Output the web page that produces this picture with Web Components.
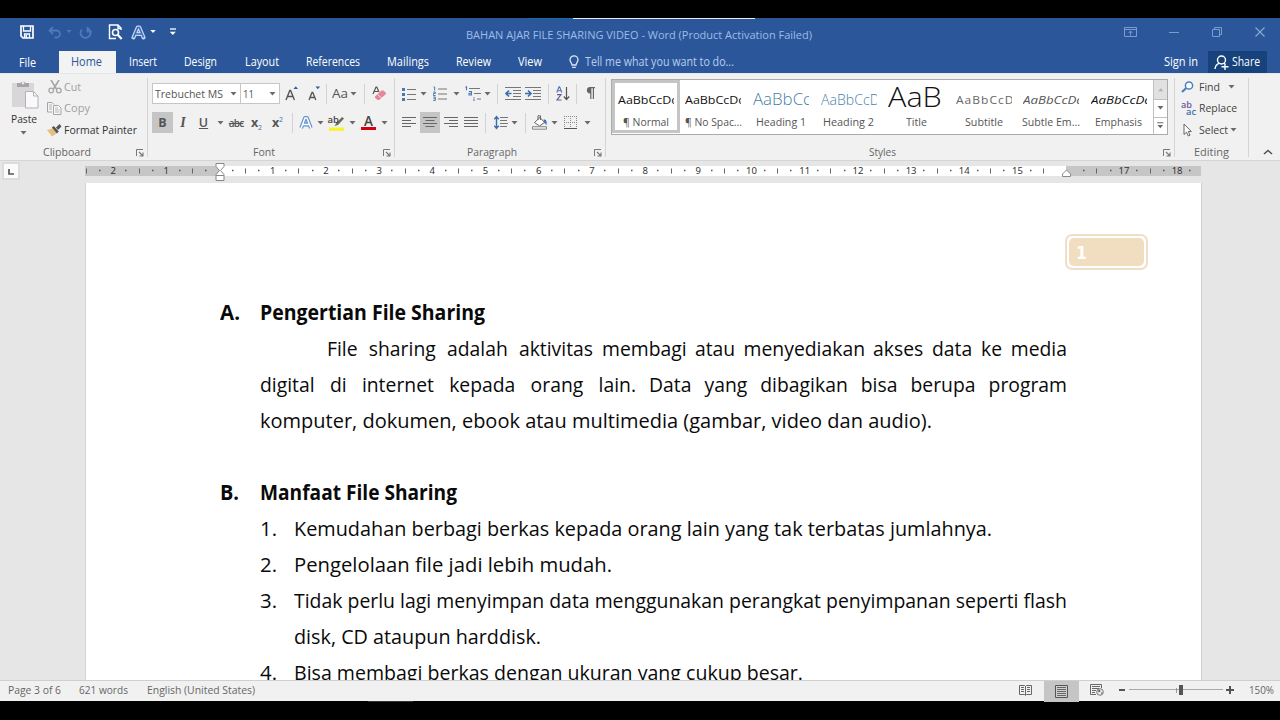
<!DOCTYPE html>
<html lang="id">
<head>
<meta charset="utf-8">
<title>BAHAN AJAR FILE SHARING VIDEO - Word</title>
<style>
html,body{margin:0;background:#000}
body{width:1280px;height:720px;overflow:hidden}
</style>
</head>
<body>
<word-app></word-app>
<script>
const ICONS = {
  down: [7,4,'<path d="M.5 0h6l-3 3.4z" fill="#6a6a6a"/>'],
  downw: [6,4,'<path d="M.3 0h5.4L3 3z" fill="#fff"/>'],
  save: [14,14,'<path d="M1 1h12v12H3L1 11z" fill="none" stroke="#fff" stroke-width="1.7"/><path d="M3.5 1v5h7V1M4.5 13V9h5v4" fill="none" stroke="#fff" stroke-width="1.3"/><path d="M5.500 10h1.600v3H5.500z" fill="#fff"/>'],
  undo: [14,13,'<path d="M5 1L1.500 4.500 5 8M2 4.500h6.500a3.500 3.500 0 010 7H6.500" fill="none" stroke="#4f79b8" stroke-width="1.800"/>'],
  redo: [14,13,'<path d="M9.500 2.200A5 5 0 113.300 3.300M9 .8v4.500h4.500" transform="translate(-.5 .3)" fill="none" stroke="#4f79b8" stroke-width="1.800"/>'],
  preview: [15,16,'<path d="M13 6V4L10 1H1.500v13.500H8M10 1v3.500h3" fill="none" stroke="#fff" stroke-width="1.400"/><circle cx="7.500" cy="8.500" r="3" fill="none" stroke="#fff" stroke-width="1.600"/><path d="M9.700 10.700l4 4.300" stroke="#fff" stroke-width="2.200"/>'],
  glowA: [15,15,'<path d="M2.500 12.500L6.700 2.500h1.600L12.500 12.500M4.500 9h6" fill="none" stroke="#c3d8f5" stroke-width="4" stroke-linejoin="round" stroke-linecap="round"/><path d="M2.500 12.500L6.700 2.500h1.600L12.500 12.500M4.500 9h6" fill="none" stroke="#3f6cb0" stroke-width="1.600"/>'],
  custom: [8,8,'<path d="M1 1h6" stroke="#fff" stroke-width="1.300"/><path d="M.8 3.800h6L3.800 7z" fill="#fff"/>'],
  ribbonopt: [13,10,'<path d="M.5 .5h12v9H.5zM.5 2.500h12M6.500 8.500V4M4.500 6l2-2 2 2" fill="none" stroke="#7b9cce"/>'],
  min: [10,10,'<path d="M0 5.500h10" stroke="#7b9cce"/>'],
  max: [10,10,'<path d="M.5 2.500h7v7h-7zM2.500 2V.5h7v7H8" fill="none" stroke="#7b9cce"/>'],
  close: [10,10,'<path d="M.5 .5l9 9M9.500 .5l-9 9" stroke="#88a8d8" stroke-width="1.100"/>'],
  bulb: [10,14,'<path d="M3 10C3 8 1 7 1 4.800a4 4 0 018 0C9 7 7 8 7 10zM3.200 12.300h3.600" fill="none" stroke="#dce6f5" stroke-width="1.300"/>'],
  person: [16,15,'<circle cx="7.500" cy="5" r="4" fill="none" stroke="#fff" stroke-width="1.400"/><path d="M1 14c.3-3 2-5 4.500-5.800M9.800 8.300l1.400 1M7.500 11.800h7M11 8.500v6.500" fill="none" stroke="#fff" stroke-width="1.400"/>'],
  paste: [28,29,'<path d="M1 3h22v24H1z" fill="#d9d6da"/><path d="M6 7V3h3.500a3 3 0 015 0H18v4z" fill="#a5a5a5"/><circle cx="12" cy="3.300" r="1.200" fill="#eee"/><path d="M14.500 11.500h8l4.500 4.500v12H14.500z" fill="#fbf8fc" stroke="#b4b0b6"/><path d="M22.500 11.500V16H27" fill="none" stroke="#b4b0b6"/>'],
  cut: [14,14,'<path d="M3 0l5.500 9M11 0L5.500 9" stroke="#a5a5a5" stroke-width="1.600"/><circle cx="3.200" cy="10.500" r="2.300" fill="none" stroke="#a5a5a5" stroke-width="1.300"/><circle cx="10.800" cy="10.500" r="2.300" fill="none" stroke="#a5a5a5" stroke-width="1.300"/>'],
  copy: [15,13,'<path d="M5 10H.5V.5H5L7 2.500" fill="#f5f5f5" stroke="#a5a5a5"/><path d="M6.500 3.500h5l2.500 2.500v6.500H6.500z" fill="#f8f8f8" stroke="#a5a5a5"/><path d="M2 3h3M2 5h3M2 7h3M8 6h3M8 8h4.500M8 10h4.500" stroke="#b5b5b5"/>'],
  brush: [15,14,'<path d="M0 7l5.500-1.500 4 5L5 13.500z" fill="#e8bf79"/><path d="M4.800 4.500l2-1.500 5 5.500-2 2z" fill="#555"/><path d="M9 4.500L12.500 1l2 2.500L11 7z" fill="#555"/>'],
  launch: [8,8,'<path d="M.5 7V.5H7" fill="none" stroke="#777"/><path d="M3 3l3.500 3.500M7 3.500V7H3.500" fill="none" stroke="#777" stroke-width="1.100"/>'],
  growA: [14,15,'<path d="M1 14L4.800 4.500h.8L9.400 14M2.500 10.500h5.500" fill="none" stroke="#555" stroke-width="1.400"/><path d="M8.500 3L10.800 .3 13 3z" fill="#2d5f9e"/>'],
  shrinkA: [13,15,'<path d="M1 14L4 6.500h.8L7.800 14M2.200 11.500h4.500" fill="none" stroke="#555" stroke-width="1.300"/><path d="M7.500 .5h4.600L9.800 3.200z" fill="#2d5f9e"/>'],
  eraser: [14,15,'<path d="M1 8L4 1h.8L7 6M2 5.500h4" fill="none" stroke="#555" stroke-width="1.200"/><path d="M3 10.500L9.500 4.500h2L14 7v1L7 14H5.500L3 11.700z" fill="#e5879a"/><path d="M5.500 8.500l4 3.500" stroke="#f8e0e4"/>'],
  textfx: [14,14,'<path d="M2.200 12L6 2h2L11.800 12M4 8.500h6" fill="none" stroke="#5f92cf" stroke-width="3.800" stroke-linejoin="round"/><path d="M2.200 12L6 2h2L11.800 12M4 8.500h6" fill="none" stroke="#fff" stroke-width="1.500"/>'],
  bullets: [14,14,'<path d="M0 1h3v3H0zM0 6h3v3H0zM0 11h3v3H0z" fill="#4c78b0"/><path d="M5 2.500h9M5 7.500h9M5 12.500h9" stroke="#777"/>'],
  numbers: [14,15,'<path d="M.5 1h1.200v3.500M.3 6h2v1.500h-2V9.500h2.300M.3 11h2v3.500h-2M.5 12.700h1.700" fill="none" stroke="#4c78b0"/><path d="M5 3h9M5 8h9M5 13h9" stroke="#777"/>'],
  multi: [16,15,'<path d="M.5 1.500l1-.7v3.400M4 5.500h2.500V9H4V7.300h2M9 11v.8M9 12.500V15" fill="none" stroke="#4c78b0" stroke-width="1.100"/><path d="M4 2.500h11M9 7.500h7M12 13h4" stroke="#777"/>'],
  outdent: [16,13,'<path d="M0 .5h16M8 3.500h8M8 6.500h8M8 9.500h8M0 12.500h16" stroke="#777"/><path d="M6.500 6.500h-5M4 3.500l-3 3 3 3" fill="none" stroke="#3b70ad" stroke-width="1.700"/>'],
  indent: [16,13,'<path d="M0 .5h16M8 3.500h8M8 6.500h8M8 9.500h8M0 12.500h16" stroke="#777"/><path d="M0 6.500h5.500M3 3.500l3 3-3 3" fill="none" stroke="#3b70ad" stroke-width="1.700"/>'],
  sort: [14,15,'<path d="M.8 6.500L3 .8h.6L5.800 6.500M1.800 4.700h3" fill="none" stroke="#4c78b0" stroke-width="1.100"/><path d="M1 8.700h4L1 14h4.500" fill="none" stroke="#74599a" stroke-width="1.200"/><path d="M10.500 1v12M7.800 10.500l2.700 3 2.700-3" fill="none" stroke="#555" stroke-width="1.200"/>'],
  pil: [10,13,'<path d="M5 0h5v1.200H9V12H7.800V1.200H6.400V12H5.200V6.500A3.200 3.200 0 015 0z" fill="#666"/>'],
  left: [14,11,'<path d="M0 .5h14M0 3.500h9M0 6.500h14M0 9.500h9" stroke="#666"/>'],
  center: [14,11,'<path d="M0 .5h14M2.500 3.500h9M0 6.500h14M2.500 9.500h9" stroke="#666"/>'],
  right: [14,11,'<path d="M0 .5h14M5 3.500h9M0 6.500h14M5 9.500h9" stroke="#666"/>'],
  just: [14,11,'<path d="M0 .5h14M0 3.500h14M0 6.500h14M0 9.500h14" stroke="#666"/>'],
  spacing: [14,15,'<path d="M6 2.500h8M6 5.500h7M6 8.500h8M6 11.500h7" stroke="#777"/><path d="M2.500 1.500v12M.3 4.200l2.200-2.700 2.200 2.700M.3 10.800l2.200 2.700 2.200-2.700" fill="none" stroke="#3b70ad" stroke-width="1.400"/>'],
  shade: [16,15,'<path d="M2.500 7.500L8 2.500l4.500 5L7.500 11z" fill="#fff" stroke="#666"/><path d="M6 5V.8h2.500V5" fill="none" stroke="#666"/><path d="M11.500 4.500c3 0 3.500 2 3 5.500l-2-2z" fill="#3b70ad"/><path d="M.5 11.700h14v2.500H.5z" fill="#eee" stroke="#888"/>'],
  borders: [13,13,'<path d="M.5 0v12M12.500 0v12M6.500 0v12M0 .5h13M0 6.500h13" fill="none" stroke="#888" stroke-dasharray="1 1"/><path d="M0 12.500h13" stroke="#555"/>'],
  hl: [16,16,'<path d="M0 12.500h15v3.300H0z" fill="#f8f32b"/><path d="M5.500 11L7 8.500l6-6.500 2 1.500L9 10z" fill="#6b6b5c"/>'],
  find: [13,12,'<circle cx="8" cy="4.500" r="3.600" fill="#fff" stroke="#4a80be" stroke-width="1.500"/><path d="M5.300 7L1 11" stroke="#4a80be" stroke-width="2.200"/>'],
  cursor: [9,14,'<path d="M1 1v10.500l2.500-2.300 1.800 3.800 1.700-.8-1.700-3.700h3z" fill="#fff" stroke="#666"/>'],
  up: [10,6,'<path d="M1 5l4-3.500L9 5" fill="none" stroke="#555" stroke-width="1.600"/>'],
  gup: [6,4,'<path d="M.3 3.200h5L2.800 .3z" fill="#b0b0b0"/>'],
  more: [7,7,'<path d="M.3 .8h6" stroke="#666"/><path d="M.5 3h5.600L3.300 6.200z" fill="#666"/>'],
  read: [13,12,'<path d="M.5 1.500h5l1 1 1-1h5v9h-5l-1 1-1-1h-5zM6.500 2v9M2 3.500h3M2 5.500h3M2 7.500h3M8 3.500h3M8 5.500h3M8 7.500h3" fill="none" stroke="#666"/>'],
  print: [13,13,'<path d="M.5 .5h12v12H.5z" fill="#d0d0d0" stroke="#555"/><path d="M2 2.500h9M2 4.500h9M2 6.500h9M2 8.500h9M2 10.500h9" stroke="#666"/>'],
  web: [14,12,'<path d="M6 10.500H.5V.5h11V4M2 2.500h8M2 4.500h7M2 6.500h4M2 8.500h3" fill="none" stroke="#666"/><circle cx="10" cy="8" r="3.300" fill="#eee" stroke="#777"/><path d="M8 6.500l2-1 .5 2-2 1zM10.500 9l2-1-.5 2z" fill="#666"/>'],
  tabL: [6,6,'<path d="M1 0v5h5" fill="none" stroke="#555" stroke-width="1.700"/>']
};
const T = (w, s, ml = 0, extra = '', attrs = '') => `<fit-text w="${w}" ${attrs} style="margin-left:${ml}px;${extra}">${s}</fit-text>`;
const C = (w, s = '', extra = '') => `<tool-cell w="${w}" ${extra}>${s}</tool-cell>`;
const I = n => `<ui-icon name="${n}"></ui-icon>`;
const SEP = w => C(w, '<i class="sep"></i>');
const BASE = `<style>*{box-sizing:border-box}.row{display:flex;align-items:center}.sep{width:1px;height:20px;background:#d2d2d2}</style>`;

function define(name, css, html) {
  customElements.define(name, class extends HTMLElement {
    constructor() {
      super();
      this.attachShadow({mode: 'open'}).innerHTML = `${BASE}<style>${css}</style>${typeof html === 'function' ? html(this) : html}`;
    }
  });
}

customElements.define('ui-icon', class extends HTMLElement {
  connectedCallback() {
    if (this.shadowRoot) return;
    const [w, h, body] = ICONS[this.getAttribute('name')];
    this.attachShadow({mode: 'open'}).innerHTML = `<style>:host{display:block;flex:none;width:${w}px;height:${h}px}svg{display:block}</style><svg width="${w}" height="${h}" viewBox="0 0 ${w} ${h}">${body}</svg>`;
  }
});

customElements.define('tool-cell', class extends HTMLElement {
  connectedCallback() {
    if (this.shadowRoot) return;
    this.attachShadow({mode: 'open'}).innerHTML = `<style>:host{display:flex;flex:none;align-items:center;justify-content:center;width:${this.getAttribute('w')}px;height:21px;box-sizing:border-box;white-space:nowrap}:host([on]){background:#c5c5c5}</style><slot></slot>`;
  }
});

define('title-bar', `
  :host{display:block;background:#2b579a;height:33px;font-size:11.3px;color:#9fbbe6}
  .edge{display:flex;height:1px}.edge b{width:45px;margin-left:528px;background:#1668b5}.edge i{width:182px;background:#e4ecf5}
  .row{height:26px}`,
  `<div class="edge"><b></b><i></i></div><div class="row">
  ${C(20)}${C(14,I('save'))}${C(14)}${C(14,I('undo'))}${C(14,'<svg width="6" height="4"><path d="M.5 0h5L3 3z" fill="#4f79b8"/></svg>')}${C(20,I('redo'))}${C(12)}${C(15,I('preview'))}${C(7)}${C(16,I('glowA'))}${C(14,I('downw'))}${C(26,I('custom'))}
  ${T(346,'BAHAN AJAR FILE SHARING VIDEO - Word (Product Activation Failed)',280,'padding-top:4px')}
  ${C(296)}${C(44,I('ribbonopt'))}${C(44,I('min'))}${C(42,I('max'))}${C(44,I('close'))}</div>`);

define('tab-bar', `
  :host{display:block;background:#2b579a;height:22px;font-size:12px;color:#fff}
  .row{height:22px;line-height:22px}
  .home{display:flex;width:57px;height:22px;margin-left:23px;background:#f3f3f3;color:#2b579a;padding-left:12px}
  .share{display:flex;align-items:center;margin-left:10px;width:59px;height:22px;background:#17427c;padding-left:6px}
  .tell{color:#b9cdec}`,
  `<div class="row">${T(17,'File',19,'padding-top:1px')}<div class="home">${T(31,'Home')}</div>
  ${T(28,'Insert',13)}${T(33,'Design',27)}${T(34,'Layout',28)}${T(54,'References',27)}${T(42,'Mailings',27)}${T(35,'Review',27)}${T(24,'View',27)}
  <span style="margin-left:27px">${I('bulb')}</span><span class="tell">${T(149,'Tell me what you want to do...',6)}</span>
  ${T(34,'Sign in',430)}<div class="share">${I('person')}${T(28,'Share',2)}</div></div>`);

define('ribbon-group', `
  :host{display:flex;flex-direction:column;flex:none;position:relative;border-right:1px solid #d4d4d4;height:79px;margin-top:4px;box-sizing:border-box}
  .body{height:67px;flex:none}
  .cap{display:flex;flex:none;align-items:center;justify-content:center;height:14px;line-height:14px;color:#666}
  .cap ui-icon{position:absolute;right:3px;bottom:0}`,
  h => `<div class="body"><slot></slot></div><div class="cap">${T(h.getAttribute('cw'),h.getAttribute('cap'),+(h.getAttribute('shift')||0))}${h.hasAttribute('plain')?'':I('launch')}</div>`);

define('clipboard-tools', `
  :host{display:flex;color:#333;line-height:16px;margin-top:-2px}
  .p{width:35px;margin-left:11px;padding-top:4px;display:flex;flex-direction:column;align-items:center}
  .p>ui-icon{margin-left:-7px}
  .l{flex:1;padding-left:1px}.l div{display:flex;align-items:center;height:21.600px}.l .dis{color:#a0a0a0}`,
  `<div class="p">${I('paste')}${T(26,'Paste',-10,'margin-right:-1px;margin-top:2px')}<span style="margin:4px 0 0 -11px">${I('down')}</span></div>
  <div class="l"><div class="dis">${C(15,I('cut'))}${T(17,'Cut',2)}</div><div class="dis">${C(15,I('copy'))}${T(26,'Copy',2)}</div><div>${C(15,I('brush'))}${T(73,'Format Painter',2)}</div></div>`);

define('font-tools', `
  :host{display:block;color:#555;padding:5px 0 0 4px;line-height:16px}
  .row{height:21px}.row+.row{margin-top:8px}
  .box{display:flex;align-items:center;height:21px;background:#fff;border:1px solid #c6c6c6;color:#555}
  .box ui-icon{margin-left:auto;margin-right:3px}
  b{font-size:12.500px}.ser{font:italic bold 14px "Liberation Serif",serif}
  .hl{display:grid}.hl>*{grid-area:1/1}.ab{font-size:9.500px;line-height:9px;font-weight:600;color:#444;margin-left:-1px}
  .fc{display:flex;flex-direction:column;align-items:center;font-weight:600;font-size:13.500px;line-height:12px;color:#444}.fc i{width:15px;height:3.500px;background:#d5000f}
  sub,sup{font-size:7px;line-height:0;color:#3b70ad}`,
  `<div class="row"><div class="box" style="width:89px;padding-left:2px">${T(68,'Trebuchet MS')}${I('down')}</div><div class="box" style="width:40px;padding-left:2px;margin-left:-1px">${T(11,'11')}${I('down')}</div>
  ${C(24,I('growA'))}${C(20,I('shrinkA'))}${SEP(4)}<span style="font-size:12.500px">${T(16,'Aa',4,'margin-right:2px')}</span>${C(7,I('down'))}${SEP(14)}${C(16,I('eraser'))}</div>
  <div class="row">${C(21,'<b>B</b>','on')}${C(20,'<span class="ser">I</span>')}${C(21,'<u style="font-size:12.500px;font-weight:600">U</u>')}${C(12,I('down'))}${C(20,`<s style="font-size:10px;letter-spacing:-.8px;font-weight:600">abc</s>`)}${C(21,'<span><b>x</b><sub>2</sub></span>')}${C(21,'<span><b>x</b><sup>2</sup></span>')}${SEP(8)}${C(20,I('textfx'))}${C(8,I('down'))}
  ${C(25,`<span class="hl">${I('hl')}<span class="ab">ab</span></span>`)}${C(7,I('down'))}${C(25,'<span class="fc">A<i></i></span>')}${C(7,I('down'))}</div>`);

define('paragraph-tools', `
  :host{display:block;padding:5px 0 0 6px}.row{height:21px}.row+.row{margin-top:8px}`,
  `<div class="row">${C(15,I('bullets'))}${C(15,I('down'))}${C(18,I('numbers'))}${C(4)}${C(7,I('down'))}${C(25,I('multi'))}${C(5,I('down'))}${SEP(15)}${C(16,I('outdent'))}${C(24,I('indent'))}${SEP(6)}${C(24,I('sort'))}${SEP(3)}${C(24,I('pil'))}</div>
  <div class="row">${C(15,I('left'))}${C(4)}${C(20,I('center'),'on')}${C(22,I('right'))}${C(18,I('just'))}${SEP(11)}${C(19,I('spacing'))}${C(8,I('down'))}${SEP(14)}${C(16,I('shade'))}${C(12,I('down'))}${C(21,I('borders'))}${C(12,I('down'))}</div>`);

define('style-tile', `
  :host{display:flex;flex-direction:column;align-items:center;width:67.600px;height:53px;border:3px solid transparent;box-sizing:border-box;flex:none}
  :host([on]){border-color:#c5c5c5}
  .pv{width:56px;height:31px;line-height:var(--pl,33px);overflow:hidden;display:flex;flex:none;color:var(--pc,#111);font-size:var(--ps,11.500px);font-weight:var(--pw,400);font-style:var(--pi,normal);letter-spacing:var(--pt,0)}
  .n{height:16px;line-height:16px;color:#555;letter-spacing:0}`,
  h => `<div class="pv">${T(h.dataset.pw,h.dataset.p)}</div><div class="n">${T(h.dataset.nw,h.dataset.n)}</div>`);

const tile = (p,pw,n,nw,st='',on='') => `<style-tile data-p="${p}" data-pw="${pw}" data-n="${n}" data-nw="${nw}" style="${st}" ${on}></style-tile>`;
define('style-gallery', `
  :host{display:flex;width:557px;height:56px;margin:1px 0 0 5px;border:1px solid #ababab;background:#fff;box-sizing:border-box}
  .sc{width:14px;margin-left:auto;border-left:1px solid #c0c0c0}.sc div{display:flex;align-items:center;justify-content:center;height:17.500px;border-top:1px solid #c0c0c0}.sc div:first-child{height:19px;border:0;background:#e1e1e1}`,
  `${tile('AaBbCcDd',61,'¶ Normal',46,'','on')}${tile('AaBbCcDd',61,'¶ No Spac...',57)}${tile('AaBbCcD',70,'Heading 1',50,'--pc:#4a7fa8;--ps:16px;--pw:300')}${tile('AaBbCcDd',67,'Heading 2',51,'--pc:#4a7fa8;--ps:14px;--pw:300')}${tile('AaBb',72,'Title',21,'--ps:27px;--pw:300;--pl:28px')}${tile('AaBbCcDd',67,'Subtitle',38,'--pc:#666;--pt:1px')}${tile('AaBbCcDd',61,'Subtle Em...',58,'--pc:#555;--pi:italic')}${tile('AaBbCcDd',61,'Emphasis',47,'--pi:italic')}
  <div class="sc"><div>${I('gup')}</div><div>${I('down')}</div><div>${I('more')}</div></div>`);

define('edit-tools', `
  :host{display:block;color:#444;line-height:16px;margin-top:-2px}.row{height:21.600px}
  .rp{display:flex;flex-direction:column;font-size:9.500px;line-height:7px;font-weight:600;color:#74599a;height:15px;width:12px}.rp i{font-style:normal;color:#3b70ad;padding-left:5px}`,
  `<div class="row">${C(24,`${I('find')}`)}${T(21,'Find',0)}${C(22,I('down'))}</div>
  <div class="row">${C(24,`<span class="rp">${T(11,'ab')}<i>${T(10,'ac')}</i></span>`)}${T(38,'Replace',0)}</div>
  <div class="row">${C(24,I('cursor'))}${T(29,'Select',0)}${C(10,I('down'))}</div>`);

define('ribbon-bar', `
  :host{display:flex;background:#f1f1f1;height:88px;font-size:11.500px;border-bottom:1px solid #d5d5d5;box-sizing:border-box;border-top:1px solid #e3e7ee}
  .col{display:flex;align-items:flex-end;margin-left:14px;padding-bottom:5px}`,
  `<ribbon-group style="width:148px" cap="Clipboard" cw="48" shift="-14"><clipboard-tools></clipboard-tools></ribbon-group>
  <ribbon-group style="width:247px" cap="Font" cw="22" shift="-14"><font-tools></font-tools></ribbon-group>
  <ribbon-group style="width:211px" cap="Paragraph" cw="50" shift="-16"><paragraph-tools></paragraph-tools></ribbon-group>
  <ribbon-group style="width:569px" cap="Styles" cw="27" shift="-15"><style-gallery></style-gallery></ribbon-group>
  <ribbon-group style="width:74px" cap="Editing" cw="35" plain><edit-tools></edit-tools></ribbon-group>
  <div class="col">${I('up')}</div>`);

function rulerSvg() {
  let s = '';
  for (let q = -10; q <= 73; q++) {
    const x = 134.5 + q * 13.3;
    if (q === 0 || q === 64 || q === 63) continue;
    if (q % 4 === 0) s += `<text x="${x}" y="9" text-anchor="middle">${Math.abs(q / 4)}</text>`;
    else if (q % 2 === 0) s += `<path d="M${Math.round(x)-.5} 3.500v5" stroke="#666"/>`;
    else s += `<path d="M${Math.round(x)-1} 5.500h1.500" stroke="#555" stroke-width="1.300"/>`;
  }
  return s;
}
define('ruler-bar', `
  :host{display:flex;height:22px;background:#e6e6e6}
  .tab{width:18px;height:18px;margin:1px 0 0 2px;border:2px solid #dcdcdc;background:#fbfbfb;display:flex;align-items:center;justify-content:center;padding-top:2px}
  svg{display:block}.r{margin:1px 0 0 65px}text{font:9.500px "Noto Sans",sans-serif;fill:#333}`,
  `<div class="tab">${I('tabL')}</div><svg class="r" width="1117" height="21" viewBox="0 -3 1117 21"><path d="M0 1h1116v10H0z" fill="#c6c6c6"/><path d="M135 1h846v10H135z" fill="#fff"/>${rulerSvg()}
  <path d="M131 -1.500h8v3l-3.500 4 3.500 4v1h-8v-1l3.500-4-3.500-4zM131 10.500h8v5h-8zM977.500 11.500v-2.500l4-4 4 4v2.500z" fill="#fff" stroke="#888"/></svg>`);

/* Justified lines are given as segments parted by "|", spread over the column. */
define('doc-line', `
  :host{display:flex;height:36px;line-height:36px;padding-left:174px}
  :host([head]){font-weight:700;padding-left:134px}.m{flex:none;width:34px}:host([head]) .m{width:40px}
  .j{display:flex;justify-content:space-between;flex:1;margin-right:134px}`,
  h => {
    const d = h.dataset;
    if (!d.t) return '';
    const ws = d.w.split('|'), ts = d.t.split('|');
    const body = ts.map((t, i) => T(ws[i], t, 0, '', d.s ? `scale="${d.s}"` : '')).join('');
    return `${d.m ? `<span class="m">${T(d.mw, d.m)}</span>` : ''}<div class="j" style="margin-left:${d.ml || 0}px">${body}</div>`;
  });
define('doc-area', `
  :host{display:flex;height:498px;background:#e6e6e6;padding-left:85px;box-sizing:border-box;overflow:hidden;border-bottom:1px solid #cfcfcf}
  .pg{width:1117px;background:#fff;border:1px solid #d2d2d2;border-width:0 1px;color:#0a0a0a;font-size:20.700px}
  .hd{height:111px;padding-top:51px}
  .bd{margin-left:979px;width:83px;height:36px;border:2px solid #f0dfc8;border-radius:7px;background:#fff;padding:2px}
  .bd div{background:#f1dec1;border-radius:5px;height:28px;color:#fff;font:bold 18px/30px "DejaVu Sans",sans-serif;padding-left:7px}`,
  `<div class="pg"><div class="hd"><div class="bd"><div>${T(11,'1')}</div></div></div>
  <doc-line head data-m="A." data-mw="20" data-t="Pengertian File Sharing" data-w="225"></doc-line>
  <doc-line data-t="File sharing adalah aktivitas|membagi atau menyediakan|akses data ke media" data-w="266|263|194" data-ml="67" data-s=".935"></doc-line>
  <doc-line data-t="digital di internet kepada orang lain.|Data yang dibagikan bisa berupa program" data-w="376|418" data-s=".935"></doc-line>
  <doc-line data-t="komputer, dokumen, ebook atau multimedia (gambar, video dan audio)." data-w="672"></doc-line>
  <doc-line></doc-line>
  <doc-line head data-m="B." data-mw="19" data-t="Manfaat File Sharing" data-w="197"></doc-line>
  <doc-line data-m="1." data-mw="17" data-t="Kemudahan berbagi berkas kepada orang lain yang tak terbatas jumlahnya." data-w="698"></doc-line>
  <doc-line data-m="2." data-mw="17" data-t="Pengelolaan file jadi lebih mudah." data-w="318"></doc-line>
  <doc-line data-m="3." data-mw="17" data-t="Tidak perlu lagi menyimpan data menggunakan|perangkat penyimpanan seperti flash" data-w="430|338"></doc-line>
  <doc-line data-t="disk, CD ataupun harddisk." data-w="247" data-ml="34"></doc-line>
  <doc-line data-m="4." data-mw="17" data-t="Bisa membagi berkas dengan ukuran yang cukup besar." data-w="509"></doc-line></div>`);

define('status-bar', `
  :host{display:block;background:#f1f1f1;height:21px;font-size:10.500px;color:#666}
  .row{height:20px;line-height:18px;padding-bottom:2px}.row>[on]{margin-bottom:-2px}.edge{display:flex;height:1px;background:#000}.edge i{width:45px;margin-left:368px;background:#333}
  .sl{display:flex;align-items:center;width:94px;height:12px;margin-left:4px;background:linear-gradient(#aaa,#aaa) 0 5px/100% 1px no-repeat}
  .sl i{width:1px;height:5px;background:#999;margin-left:47px}.sl b{width:4px;height:10px;background:#555;margin-left:2px}
  .mi{width:6px;height:2px;background:#555}.pl{width:8px;height:8px;margin-left:3px;background:linear-gradient(#555,#555) 0 3px/8px 2px no-repeat,linear-gradient(#555,#555) 3px 0/2px 8px no-repeat}`,
  `<div class="row">${T(53,'Page 3 of 6',8)}${T(49,'621 words',18)}${T(108,'English (United States)',19)}
  ${C(763)}${C(14,I('read'))}${C(12)}${C(35,I('print'),'on')}${C(36,I('web'))}${C(4)}<i class="mi"></i><div class="sl"><i></i><b></b></div><i class="pl"></i>${T(25,'150%',15)}</div><div class="edge"><i></i></div>`);

define('word-app', `
  :host{display:flex;flex-direction:column;width:1280px;height:720px;padding-top:18px;box-sizing:border-box;background:#000;font-family:"Open Sans","Noto Sans",sans-serif;overflow:hidden}
  title-bar,tab-bar,ribbon-bar,ruler-bar,doc-area,status-bar{flex:none}`,
  `<title-bar></title-bar><tab-bar></tab-bar><ribbon-bar></ribbon-bar><ruler-bar></ruler-bar><doc-area></doc-area><status-bar></status-bar>`);

/* Single-line text squeezed or stretched to a set width; with "scale" the rest is shared among the spaces. */
customElements.define('fit-text', class extends HTMLElement {
  connectedCallback() {
    if (this.shadowRoot) return;
    const w = +this.getAttribute('w');
    this.attachShadow({mode: 'open'}).innerHTML = `<style>:host{display:block;flex:none;width:${w}px;white-space:nowrap}span{display:inline-block;transform-origin:0 50%}</style><span><slot></slot></span>`;
    const span = this.shadowRoot.querySelector('span');
    const natural = span.getBoundingClientRect().width;
    if (!natural) return;
    let k = +this.getAttribute('scale');
    if (k) span.style.wordSpacing = (w / k - natural) / (this.textContent.trim().split(' ').length - 1) + 'px';
    else k = w / natural;
    span.style.transform = `scaleX(${k})`;
  }
});
</script>
</body>
</html>
